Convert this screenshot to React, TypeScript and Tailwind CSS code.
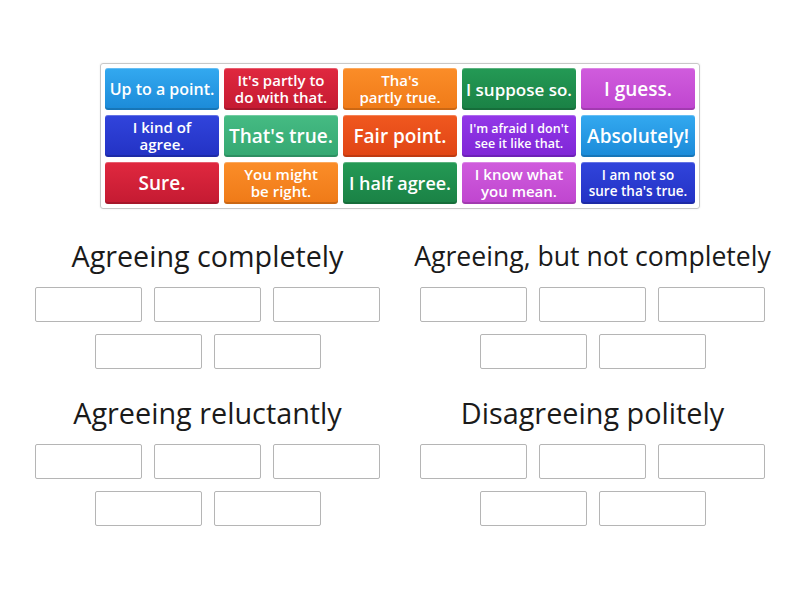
import React from "react";

type Tile = { lines: string[]; color: string; size: string };

const tiles: Tile[] = [
  { lines: ["Up to a point."], color: "bg-gradient-to-b from-[#33a9f0] to-[#1b8ad8]", size: "text-[16px] leading-[18px]" },
  { lines: ["It's partly to", "do with that."], color: "bg-gradient-to-b from-[#e0283f] to-[#c41a32]", size: "text-[15px] leading-[17px]" },
  { lines: ["Tha's", "partly true."], color: "bg-gradient-to-b from-[#fb8d28] to-[#ef7a17]", size: "text-[15px] leading-[17px]" },
  { lines: ["I suppose so."], color: "bg-gradient-to-b from-[#249a55] to-[#1a8145]", size: "text-[17px] leading-[19px]" },
  { lines: ["I guess."], color: "bg-gradient-to-b from-[#d05cdd] to-[#bf45cf]", size: "text-[19px] leading-[21px]" },
  { lines: ["I kind of", "agree."], color: "bg-gradient-to-b from-[#3144dc] to-[#2332c4]", size: "text-[15px] leading-[17px]" },
  { lines: ["That's true."], color: "bg-gradient-to-b from-[#45bb83] to-[#35a872]", size: "text-[19px] leading-[21px]" },
  { lines: ["Fair point."], color: "bg-gradient-to-b from-[#f0581f] to-[#e04414]", size: "text-[19px] leading-[21px]" },
  { lines: ["I'm afraid I don't", "see it like that."], color: "bg-gradient-to-b from-[#9337e8] to-[#7f26d6]", size: "text-[12.5px] leading-[15px]" },
  { lines: ["Absolutely!"], color: "bg-gradient-to-b from-[#33a9f0] to-[#1b8ad8]", size: "text-[19px] leading-[21px]" },
  { lines: ["Sure."], color: "bg-gradient-to-b from-[#e0283f] to-[#c41a32]", size: "text-[19px] leading-[21px]" },
  { lines: ["You might", "be right."], color: "bg-gradient-to-b from-[#fb8d28] to-[#ef7a17]", size: "text-[15px] leading-[17px]" },
  { lines: ["I half agree."], color: "bg-gradient-to-b from-[#249a55] to-[#1a8145]", size: "text-[18px] leading-[20px]" },
  { lines: ["I know what", "you mean."], color: "bg-gradient-to-b from-[#d05cdd] to-[#bf45cf]", size: "text-[15px] leading-[17px]" },
  { lines: ["I am not so", "sure tha's true."], color: "bg-gradient-to-b from-[#3144dc] to-[#2332c4]", size: "text-[13.5px] leading-[16px]" },
];

function Group({ title, size }: { title: string; size: string }) {
  return (
    <div className="w-[345px] flex flex-col items-center">
      <div className={`${size} leading-[38px] text-[#1a1a1a] whitespace-nowrap mb-[12px]`}>{title}</div>
      <div className="flex flex-col items-center gap-[12px]">
        <div className="flex gap-[12px]">
          <div className="w-[107px] h-[35px] border border-[#b5b5b5] rounded-[2px] bg-white" />
          <div className="w-[107px] h-[35px] border border-[#b5b5b5] rounded-[2px] bg-white" />
          <div className="w-[107px] h-[35px] border border-[#b5b5b5] rounded-[2px] bg-white" />
        </div>
        <div className="flex gap-[12px]">
          <div className="w-[107px] h-[35px] border border-[#b5b5b5] rounded-[2px] bg-white" />
          <div className="w-[107px] h-[35px] border border-[#b5b5b5] rounded-[2px] bg-white" />
        </div>
      </div>
    </div>
  );
}

export default function App() {
  return (
    <div className="w-[800px] h-[600px] bg-white overflow-hidden" style={{ fontFamily: '"Open Sans", "Noto Sans", sans-serif' }}>
      <div className="pt-[63px] flex justify-center">
        <div className="w-[600px] border border-[#c8c8c8] rounded-[3px] p-[4px] shadow-[0_0_2px_rgba(0,0,0,0.1)]">
          <div className="grid grid-cols-[repeat(5,114px)] grid-rows-[repeat(3,42px)] gap-[5px]">
            {tiles.map((t, i) => (
              <div
                key={i}
                className={`${t.color} rounded-[3px] flex flex-col items-center justify-center text-center text-white font-semibold shadow-[inset_0_1px_0_rgba(255,255,255,0.25),inset_0_-2px_0_rgba(0,0,0,0.15)] whitespace-nowrap ${t.size}`}
              >
                {t.lines.map((l, j) => (
                  <div key={j}>{l}</div>
                ))}
              </div>
            ))}
          </div>
        </div>
      </div>
      <div className="flex pl-[35px] gap-[40px] mt-[28px]">
        <Group title="Agreeing completely" size="text-[28.7px]" />
        <Group title="Agreeing, but not completely" size="text-[26.6px]" />
      </div>
      <div className="flex pl-[35px] gap-[40px] mt-[25px]">
        <Group title="Agreeing reluctantly" size="text-[28.8px]" />
        <Group title="Disagreeing politely" size="text-[28.8px]" />
      </div>
    </div>
  );
}
